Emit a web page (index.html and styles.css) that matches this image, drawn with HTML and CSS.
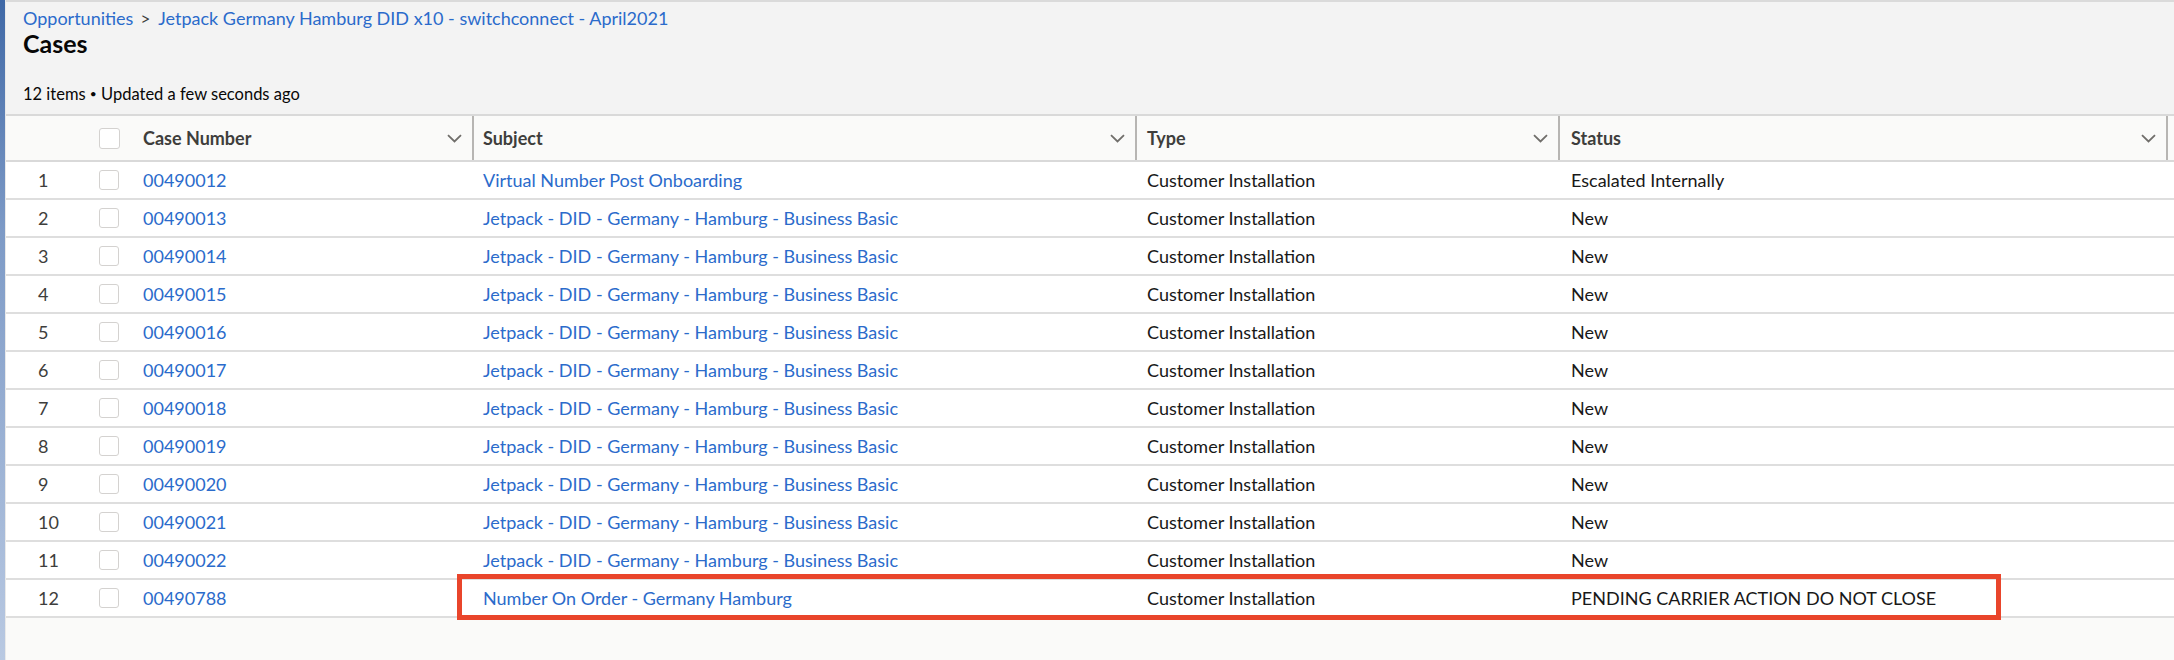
FILE: index.html
```html
<!DOCTYPE html>
<html>
<head>
<meta charset="utf-8">
<link rel="stylesheet" href="styles.css">
</head>
<body>
<div class="app">
  <div class="edge"></div>
  <div class="page">
    <header class="page-header">
      <div class="breadcrumb"><a class="link">Opportunities</a><span class="sep">&gt;</span><a class="link">Jetpack Germany Hamburg DID x10 - switchconnect - April2021</a></div>
      <h1 class="title">Cases</h1>
      <div class="meta">12 items <span class="dot">•</span> Updated a few seconds ago</div>
    </header>
    <div class="table">
      <div class="row head">
        <div class="cell num"></div>
        <div class="cell chk"><span class="box"></span></div>
        <div class="cell col"><span class="label">Case Number</span><svg class="chev" width="15" height="9" viewBox="0 0 15 9"><path d="M1 1.2 L7.5 7.5 L14 1.2" fill="none" stroke="#706e6b" stroke-width="1.8"/></svg></div>
        <div class="cell col"><span class="label">Subject</span><svg class="chev" width="15" height="9" viewBox="0 0 15 9"><path d="M1 1.2 L7.5 7.5 L14 1.2" fill="none" stroke="#706e6b" stroke-width="1.8"/></svg></div>
        <div class="cell col"><span class="label">Type</span><svg class="chev" width="15" height="9" viewBox="0 0 15 9"><path d="M1 1.2 L7.5 7.5 L14 1.2" fill="none" stroke="#706e6b" stroke-width="1.8"/></svg></div>
        <div class="cell col"><span class="label">Status</span><svg class="chev" width="15" height="9" viewBox="0 0 15 9"><path d="M1 1.2 L7.5 7.5 L14 1.2" fill="none" stroke="#706e6b" stroke-width="1.8"/></svg></div>
        <div class="cell tail"></div>
      </div>
      <div class="row"><div class="cell num">1</div><div class="cell chk"><span class="box"></span></div><div class="cell c-case"><a class="link">00490012</a></div><div class="cell c-subj"><a class="link">Virtual Number Post Onboarding</a></div><div class="cell c-type">Customer Installation</div><div class="cell c-stat">Escalated Internally</div><div class="cell tail"></div></div>
      <div class="row"><div class="cell num">2</div><div class="cell chk"><span class="box"></span></div><div class="cell c-case"><a class="link">00490013</a></div><div class="cell c-subj"><a class="link">Jetpack - DID - Germany - Hamburg - Business Basic</a></div><div class="cell c-type">Customer Installation</div><div class="cell c-stat">New</div><div class="cell tail"></div></div>
      <div class="row"><div class="cell num">3</div><div class="cell chk"><span class="box"></span></div><div class="cell c-case"><a class="link">00490014</a></div><div class="cell c-subj"><a class="link">Jetpack - DID - Germany - Hamburg - Business Basic</a></div><div class="cell c-type">Customer Installation</div><div class="cell c-stat">New</div><div class="cell tail"></div></div>
      <div class="row"><div class="cell num">4</div><div class="cell chk"><span class="box"></span></div><div class="cell c-case"><a class="link">00490015</a></div><div class="cell c-subj"><a class="link">Jetpack - DID - Germany - Hamburg - Business Basic</a></div><div class="cell c-type">Customer Installation</div><div class="cell c-stat">New</div><div class="cell tail"></div></div>
      <div class="row"><div class="cell num">5</div><div class="cell chk"><span class="box"></span></div><div class="cell c-case"><a class="link">00490016</a></div><div class="cell c-subj"><a class="link">Jetpack - DID - Germany - Hamburg - Business Basic</a></div><div class="cell c-type">Customer Installation</div><div class="cell c-stat">New</div><div class="cell tail"></div></div>
      <div class="row"><div class="cell num">6</div><div class="cell chk"><span class="box"></span></div><div class="cell c-case"><a class="link">00490017</a></div><div class="cell c-subj"><a class="link">Jetpack - DID - Germany - Hamburg - Business Basic</a></div><div class="cell c-type">Customer Installation</div><div class="cell c-stat">New</div><div class="cell tail"></div></div>
      <div class="row"><div class="cell num">7</div><div class="cell chk"><span class="box"></span></div><div class="cell c-case"><a class="link">00490018</a></div><div class="cell c-subj"><a class="link">Jetpack - DID - Germany - Hamburg - Business Basic</a></div><div class="cell c-type">Customer Installation</div><div class="cell c-stat">New</div><div class="cell tail"></div></div>
      <div class="row"><div class="cell num">8</div><div class="cell chk"><span class="box"></span></div><div class="cell c-case"><a class="link">00490019</a></div><div class="cell c-subj"><a class="link">Jetpack - DID - Germany - Hamburg - Business Basic</a></div><div class="cell c-type">Customer Installation</div><div class="cell c-stat">New</div><div class="cell tail"></div></div>
      <div class="row"><div class="cell num">9</div><div class="cell chk"><span class="box"></span></div><div class="cell c-case"><a class="link">00490020</a></div><div class="cell c-subj"><a class="link">Jetpack - DID - Germany - Hamburg - Business Basic</a></div><div class="cell c-type">Customer Installation</div><div class="cell c-stat">New</div><div class="cell tail"></div></div>
      <div class="row"><div class="cell num">10</div><div class="cell chk"><span class="box"></span></div><div class="cell c-case"><a class="link">00490021</a></div><div class="cell c-subj"><a class="link">Jetpack - DID - Germany - Hamburg - Business Basic</a></div><div class="cell c-type">Customer Installation</div><div class="cell c-stat">New</div><div class="cell tail"></div></div>
      <div class="row"><div class="cell num">11</div><div class="cell chk"><span class="box"></span></div><div class="cell c-case"><a class="link">00490022</a></div><div class="cell c-subj"><a class="link">Jetpack - DID - Germany - Hamburg - Business Basic</a></div><div class="cell c-type">Customer Installation</div><div class="cell c-stat">New</div><div class="cell tail"></div></div>
      <div class="row marked"><div class="cell num">12</div><div class="cell chk"><span class="box"></span></div><div class="cell c-case"><a class="link">00490788</a></div><div class="cell c-subj"><a class="link">Number On Order - Germany Hamburg</a></div><div class="cell c-type">Customer Installation</div><div class="cell c-stat">PENDING CARRIER ACTION DO NOT CLOSE</div><div class="cell tail"></div><div class="highlight"></div></div>
    </div>
  </div>
</div>
</body>
</html>
```

FILE: styles.css
```css
html, body {
  margin: 0;
  padding: 0;
  width: 2174px;
  height: 660px;
  overflow: hidden;
}
body {
  font-family: Lato, "Open Sans", "Liberation Sans", sans-serif;
  color: #181818;
  background: #fafaf9;
}
.app {
  display: flex;
  height: 660px;
}
.edge {
  width: 5px;
  flex: none;
  background: linear-gradient(#3f68a6, #7d9ac6 35%, #b9c9e2);
  border-right: 1px solid #e9e9e9;
}
.page {
  flex: 1;
  background: #fafaf9;
  display: flex;
  flex-direction: column;
}
.page-header {
  background: #f3f3f3;
  border-top: 2px solid #dadada;
  padding: 6px 0 10px 17px;
}
.link {
  color: #2b6bcb;
  text-decoration: none;
}
.breadcrumb {
  font-size: 18px;
  line-height: 21px;
}
.breadcrumb .sep {
  color: #3e3e3c;
  margin: 0 8px 0 7px;
  font-size: 17px;
}
.title {
  margin: 0;
  font-size: 25px;
  line-height: 28px;
  font-weight: 700;
  color: #080707;
}
.meta {
  margin-top: 27px;
  height: 20px;
  overflow: hidden;
  font-size: 16.5px;
  line-height: 20px;
  color: #080707;
}
.meta .dot {
  font-size: 12px;
  line-height: 1;
  vertical-align: 2px;
}
.table {
  position: relative;
}
.row {
  position: relative;
  display: grid;
  grid-template-columns: 82px 42px 344px 663px 423px 608px 6px;
  height: 36px;
  background: #ffffff;
  border-bottom: 2px solid #dedede;
  font-size: 18px;
}
.row.head {
  height: 44px;
  background: #fafaf9;
  border-top: 2px solid #d9d9d9;
  border-bottom: 2px solid #d9d9d9;
}
.cell {
  display: flex;
  align-items: center;
  white-space: nowrap;
  overflow: hidden;
}
.num {
  padding-left: 32px;
  color: #3e3e3c;
  font-size: 18px;
}
.chk {
  justify-content: center;
}
.box {
  display: block;
  width: 18px;
  height: 18px;
  border: 1.5px solid #d4d2d0;
  border-radius: 3px;
  background: #ffffff;
}
.head .box {
  width: 19px;
  height: 19px;
}
.col {
  justify-content: space-between;
  padding-left: 13px;
  padding-right: 10px;
  border-right: 2px solid #b7b5b3;
}
.head .col:nth-child(4) { padding-left: 9px; }
.head .col:nth-child(5) { padding-left: 10px; }
.head .col:nth-child(6) { padding-left: 11px; }
.label {
  font-weight: 700;
  color: #3e3e3c;
  font-size: 18px;
}
.chev {
  flex: none;
}
.c-case { padding-left: 13px; }
.c-subj { padding-left: 9px; }
.c-type { padding-left: 10px; }
.c-stat { padding-left: 11px; }
.highlight {
  position: absolute;
  left: 451px;
  top: -6px;
  width: 1534px;
  height: 36px;
  border: 5px solid #e9452b;
  pointer-events: none;
}
```
